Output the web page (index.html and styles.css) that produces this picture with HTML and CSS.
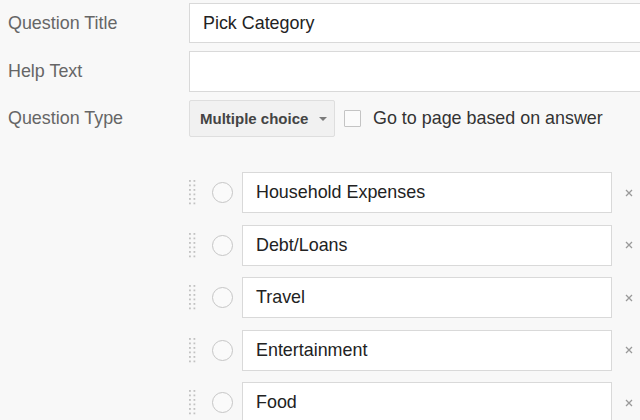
FILE: index.html
```html
<!DOCTYPE html>
<html>
<head>
<meta charset="utf-8">
<link rel="stylesheet" href="styles.css">
</head>
<body>
<div class="form">
  <div class="field">
    <div class="lbl">Question Title</div>
    <div class="input wide">Pick Category</div>
  </div>
  <div class="field">
    <div class="lbl">Help Text</div>
    <div class="input wide tall"></div>
  </div>
  <div class="field type">
    <div class="lbl">Question Type</div>
    <div class="select">Multiple choice<span class="caret"></span></div>
    <span class="check"></span>
    <span class="check-text">Go to page based on answer</span>
  </div>
  <div class="options">
    <div class="opt"><span class="handle"></span><span class="radio"></span><div class="input opt-input">Household Expenses</div><svg class="x" width="8" height="8" viewBox="0 0 8 8"><path d="M1 1L7 7M7 1L1 7" stroke="#9a9a9a" stroke-width="1.3"/></svg></div>
    <div class="opt"><span class="handle"></span><span class="radio"></span><div class="input opt-input">Debt/Loans</div><svg class="x" width="8" height="8" viewBox="0 0 8 8"><path d="M1 1L7 7M7 1L1 7" stroke="#9a9a9a" stroke-width="1.3"/></svg></div>
    <div class="opt"><span class="handle"></span><span class="radio"></span><div class="input opt-input">Travel</div><svg class="x" width="8" height="8" viewBox="0 0 8 8"><path d="M1 1L7 7M7 1L1 7" stroke="#9a9a9a" stroke-width="1.3"/></svg></div>
    <div class="opt"><span class="handle"></span><span class="radio"></span><div class="input opt-input">Entertainment</div><svg class="x" width="8" height="8" viewBox="0 0 8 8"><path d="M1 1L7 7M7 1L1 7" stroke="#9a9a9a" stroke-width="1.3"/></svg></div>
    <div class="opt"><span class="handle"></span><span class="radio"></span><div class="input opt-input">Food</div><svg class="x" width="8" height="8" viewBox="0 0 8 8"><path d="M1 1L7 7M7 1L1 7" stroke="#9a9a9a" stroke-width="1.3"/></svg></div>
  </div>
</div>
</body>
</html>
```

FILE: styles.css
```css
html, body {
  margin: 0;
  padding: 0;
  background: #f8f8f8;
  overflow: hidden;
  width: 640px;
  height: 420px;
}
body {
  font-family: "Liberation Sans", Arial, sans-serif;
  font-size: 17.9px;
  color: #222;
}
.form {
  padding-top: 3px;
}
.field {
  display: flex;
  align-items: center;
  margin-bottom: 8px;
}
.lbl {
  width: 181px;
  padding-left: 8px;
  color: #666;
  flex: none;
}
.input {
  box-sizing: border-box;
  background: #fff;
  border: 1px solid #d9d9d9;
  height: 40px;
  padding-left: 13px;
  display: flex;
  align-items: center;
  color: #222;
}
.wide {
  width: 451px;
  border-right: none;
}
.tall {
  height: 41px;
}
.type {
  margin-top: 1px;
}
.select {
  box-sizing: border-box;
  width: 146px;
  height: 37px;
  background: #f1f1f1;
  border: 1px solid #dedede;
  border-radius: 2px;
  display: flex;
  align-items: center;
  padding-left: 10px;
  font-size: 15px;
  font-weight: bold;
  color: #444;
}
.caret {
  margin-left: 11px;
  width: 0;
  height: 0;
  border-left: 4px solid transparent;
  border-right: 4px solid transparent;
  border-top: 4px solid #7a7a7a;
}
.check {
  box-sizing: border-box;
  width: 17px;
  height: 17px;
  border: 1px solid #c4c4c4;
  background: #fbfbfb;
  border-radius: 1px;
  margin-left: 9px;
  margin-right: 12px;
}
.check-text {
  color: #333;
}
.options {
  margin-top: 35px;
  padding-left: 189px;
  display: flex;
  flex-direction: column;
  gap: 11.5px;
}
.opt {
  display: flex;
  align-items: center;
}
.handle {
  width: 7px;
  height: 25px;
  background:
    radial-gradient(circle at 1px 1px, #c2c2c2 1.2px, transparent 1.3px) 0 0 / 4.5px 4.5px;
  margin-right: 16px;
  flex: none;
}
.radio {
  box-sizing: border-box;
  width: 21px;
  height: 21px;
  border: 1.5px solid #c6c6c6;
  border-radius: 50%;
  background: #fafafa;
  margin-right: 9px;
  flex: none;
}
.opt-input {
  width: 370px;
  height: 41px;
}
.x {
  margin-left: 13px;
  flex: none;
}
```
